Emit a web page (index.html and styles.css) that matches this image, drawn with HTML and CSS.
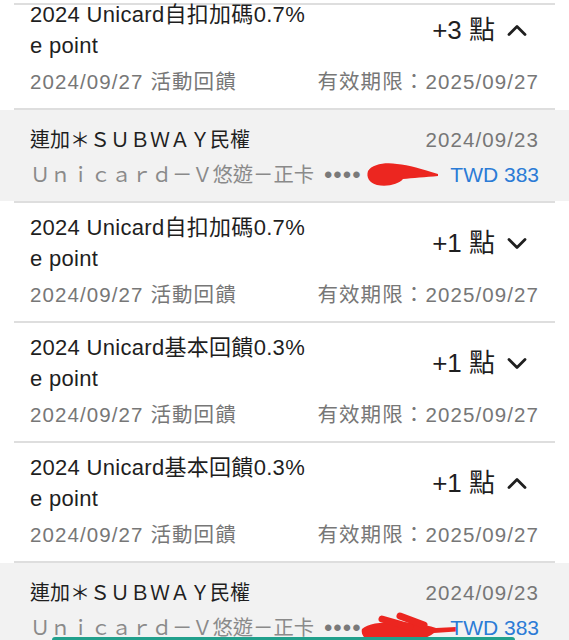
FILE: index.html
```html
<!DOCTYPE html>
<html lang="zh-Hant">
<head>
<meta charset="utf-8">
<title>e point</title>
<link rel="stylesheet" href="styles.css">
</head>
<body>
<div class="page">
  <div class="sep sep-top"></div>

  <div class="row row-first">
    <div class="head">
      <div class="title">2024 Unicard自扣加碼0.7%<br>e point</div>
      <div class="pts"><span>+3 點</span><svg class="chev" width="20" height="12" viewBox="0 0 20 12"><polyline points="2,10.5 10,2.5 18,10.5"/></svg></div>
    </div>
    <div class="meta"><span>2024/09/27 活動回饋</span><span>有效期限：2025/09/27</span></div>
  </div>
  <div class="sep"></div>

  <div class="txn">
    <div class="line1"><span class="merchant">連加＊ＳＵＢＷＡＹ民權</span><span class="date">2024/09/23</span></div>
    <div class="line2">
      <span class="card">Ｕｎｉｃａｒｄ－Ｖ悠遊－正卡<span class="dots">••••</span><svg class="scrib" width="74" height="26" viewBox="0 0 74 26"><path d="M2,9 C6,2 20,0 31,2 C43,3 56,7 72,12 L72,14 C60,15 46,16 37,17 C33,22 22,25 11,23 C3,21 0,15 2,9 Z"/></svg></span>
      <span class="amt">TWD 383</span>
    </div>
  </div>
  <div class="sep"></div>

  <div class="row">
    <div class="head">
      <div class="title">2024 Unicard自扣加碼0.7%<br>e point</div>
      <div class="pts"><span>+1 點</span><svg class="chev" width="20" height="12" viewBox="0 0 20 12"><polyline points="2,2.5 10,10.5 18,2.5"/></svg></div>
    </div>
    <div class="meta"><span>2024/09/27 活動回饋</span><span>有效期限：2025/09/27</span></div>
  </div>
  <div class="sep"></div>

  <div class="row">
    <div class="head">
      <div class="title">2024 Unicard基本回饋0.3%<br>e point</div>
      <div class="pts"><span>+1 點</span><svg class="chev" width="20" height="12" viewBox="0 0 20 12"><polyline points="2,2.5 10,10.5 18,2.5"/></svg></div>
    </div>
    <div class="meta"><span>2024/09/27 活動回饋</span><span>有效期限：2025/09/27</span></div>
  </div>
  <div class="sep"></div>

  <div class="row">
    <div class="head">
      <div class="title">2024 Unicard基本回饋0.3%<br>e point</div>
      <div class="pts"><span>+1 點</span><svg class="chev" width="20" height="12" viewBox="0 0 20 12"><polyline points="2,10.5 10,2.5 18,10.5"/></svg></div>
    </div>
    <div class="meta"><span>2024/09/27 活動回饋</span><span>有效期限：2025/09/27</span></div>
  </div>
  <div class="sep"></div>

  <div class="txn">
    <div class="line1"><span class="merchant">連加＊ＳＵＢＷＡＹ民權</span><span class="date">2024/09/23</span></div>
    <div class="line2">
      <span class="card">Ｕｎｉｃａｒｄ－Ｖ悠遊－正卡<span class="dots">••••</span><svg class="scrib scrib2" width="80" height="30" viewBox="0 0 80 30"><path d="M0,16 C8,9 30,8 50,10 C60,11 68,13 74,15 L94,14 L94,18.5 L72,20 C62,28 40,33 18,31 C6,30 -2,23 0,16 Z"/><path class="stroke" d="M20,6 L48,14"/><path class="stroke" d="M38,3 L62,12"/></svg></span>
      <span class="amt">TWD 383</span>
    </div>
  </div>

  <div class="teal"></div>
</div>
</body>
</html>
```

FILE: styles.css
```css
* { box-sizing: border-box; }

body {
  margin: 0;
  background: #ffffff;
  font-family: "Liberation Sans", "Noto Sans CJK TC", sans-serif;
  color: #1f1f1f;
}

.page {
  position: relative;
  height: 640px;
  overflow: hidden;
}

.sep {
  height: 2px;
  margin: 0 14px;
  background: #dedede;
}

.sep-top {
  margin-top: 3px;
}

.row {
  padding: 9px 30px 11px;
}

.row-first {
  margin-top: -6px;
  padding-top: 0;
}

.head {
  display: flex;
  justify-content: space-between;
  align-items: center;
}

.title {
  font-size: 22px;
  line-height: 31px;
  letter-spacing: 0.3px;
  color: #1f1f1f;
  white-space: nowrap;
}

.pts {
  display: flex;
  align-items: center;
  gap: 12px;
  margin-right: 12px;
  font-size: 26px;
  line-height: 31px;
  color: #1f1f1f;
  white-space: nowrap;
}

.chev polyline {
  fill: none;
  stroke: #1f1f1f;
  stroke-width: 2.8;
  stroke-linecap: round;
  stroke-linejoin: round;
}

.meta {
  display: flex;
  justify-content: space-between;
  margin-top: 6px;
  font-size: 20.5px;
  line-height: 30px;
  color: #777777;
  letter-spacing: 1.1px;
  white-space: nowrap;
}

.txn {
  background: #f2f2f2;
  padding: 15px 30px 11px;
}

.line1,
.line2 {
  display: flex;
  justify-content: space-between;
  align-items: center;
  line-height: 30px;
  white-space: nowrap;
}

.line2 {
  margin-top: 5px;
}

.merchant {
  font-size: 20px;
  color: #1f1f1f;
}

.date {
  font-size: 20.5px;
  color: #777777;
  letter-spacing: 1.1px;
}

.card {
  display: flex;
  align-items: center;
  flex-shrink: 0;
  font-size: 20.3px;
  color: #8a8a8a;
}

.dots {
  margin-left: 10px;
  font-size: 24px;
  letter-spacing: 1px;
  color: #7a7a7a;
}

.scrib {
  margin-left: 4px;
  overflow: visible;
  flex-shrink: 0;
}

.scrib path {
  fill: #ec2620;
}

.scrib2 {
  margin-left: 0;
}

.scrib2 path.stroke {
  fill: none;
  stroke: #ec2620;
  stroke-width: 7;
  stroke-linecap: round;
}

.amt {
  flex-shrink: 0;
  font-size: 21px;
  color: #2b7bd6;
}

.teal {
  position: absolute;
  left: 52px;
  bottom: 0;
  width: 463px;
  height: 3px;
  background: #22a08c;
  border-radius: 3px 3px 0 0;
}
```
